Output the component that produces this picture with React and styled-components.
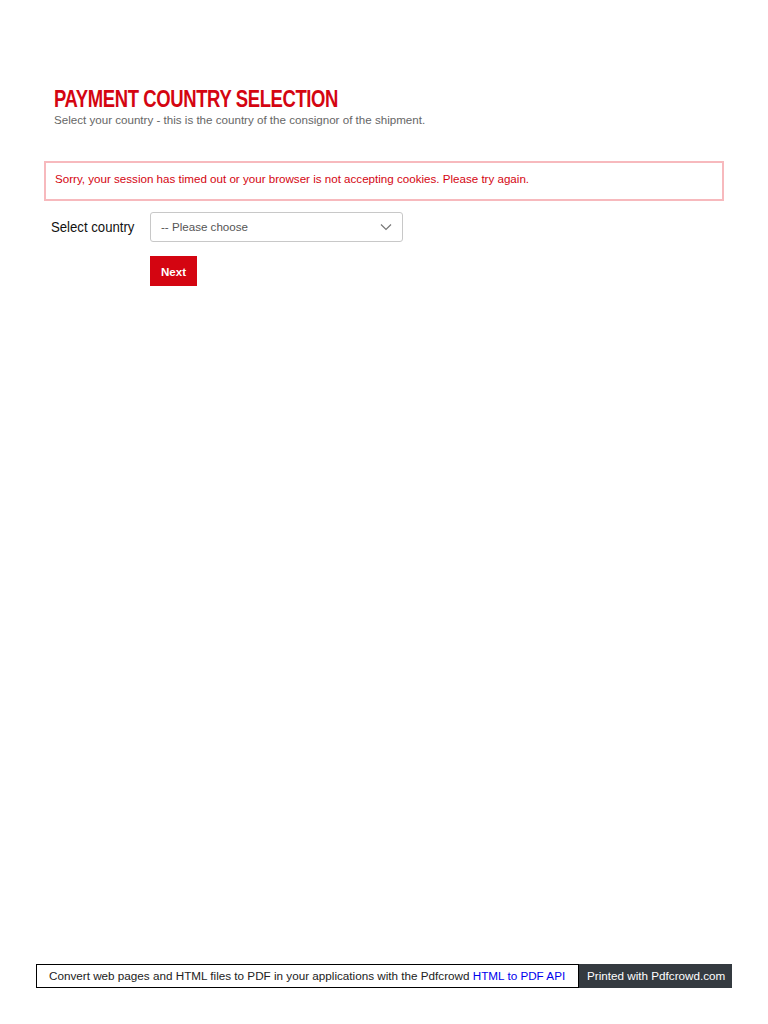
import styled, {createGlobalStyle} from 'styled-components';

const GlobalStyle = createGlobalStyle`
  html, body {
    margin: 0;
    padding: 0;
    background: #fff;
  }
  body {
    font-family: "Liberation Sans", Arial, sans-serif;
  }
`

const Page = styled.div`
  height: 1024px;
  display: flex;
  flex-direction: column;
  box-sizing: border-box;
  padding: 86px 0 36px;
`

const Main = styled.main`
  padding: 0 44px;
`

const Header = styled.header`
  padding-left: 10px;
  margin-bottom: 34px;
`

const Title = styled.h1`
  display: inline-block;
  margin: 0;
  font-family: "Liberation Sans", Arial, sans-serif;
  font-weight: bold;
  font-size: 24px;
  line-height: 26px;
  letter-spacing: -0.5px;
  color: #d40511;
  transform: scaleX(0.77);
  transform-origin: left center;
  white-space: nowrap;
`

const Subtitle = styled.p`
  margin: 0;
  font-size: 11.6px;
  line-height: 15px;
  color: #666;
`

const Alert = styled.div`
  border: 2px solid #f7b9bd;
  padding: 8px 9px 13px;
  font-size: 11.6px;
  line-height: 15px;
  color: #d40511;
  margin-bottom: 11px;
`

const Row = styled.div`
  display: flex;
  align-items: center;
  gap: 16px;
  padding-left: 7px;
`

const Label = styled.label`
  width: 83px;
  white-space: nowrap;
  font-size: 14px;
  color: #111;
  display: inline-block;
  transform: scaleX(0.94);
  transform-origin: left center;
`

const SelectBox = styled.div`
  box-sizing: border-box;
  width: 253px;
  height: 30px;
  border: 1px solid #c8c8c8;
  border-radius: 3px;
  display: flex;
  align-items: center;
  justify-content: space-between;
  padding: 0 10px;
  font-size: 11.6px;
  color: #555;

  span {
    margin-top: -1px;
  }
`

const Actions = styled.div`
  padding: 14px 0 0 106px;
`

const Button = styled.button`
  border: none;
  background: #d40511;
  color: #fff;
  font-family: "Liberation Sans", Arial, sans-serif;
  font-weight: bold;
  font-size: 11.6px;
  height: 30px;
  padding: 0 11px;
  cursor: pointer;
`

const Footer = styled.footer`
  margin-top: auto;
  display: flex;
  align-items: stretch;
  padding-left: 36px;
  font-size: 11.7px;
  line-height: 22px;
  white-space: nowrap;
`

const Promo = styled.div`
  width: 543px;
  box-sizing: border-box;
  border: 1px solid #000;
  padding: 0 0 0 12px;
  color: #222;

  a {
    color: #0000ee;
    text-decoration: none;
  }
`

const Printed = styled.div`
  width: 153px;
  box-sizing: border-box;
  background: #343a40;
  color: #fff;
  padding: 0 8px;
  line-height: 24px;
`

const Chevron = () => (
  <svg width="12" height="8" viewBox="0 0 12 8" fill="none">
    <path d="M1 1.5 6 6.5 11 1.5" stroke="#777" strokeWidth="1.2" />
  </svg>
)

const App = () => {
  return (
    <>
      <GlobalStyle />
      <Page>
        <Main>
          <Header>
            <Title>PAYMENT COUNTRY SELECTION</Title>
            <Subtitle>Select your country - this is the country of the consignor of the shipment.</Subtitle>
          </Header>
          <Alert>Sorry, your session has timed out or your browser is not accepting cookies. Please try again.</Alert>
          <Row>
            <Label>Select country</Label>
            <SelectBox>
              <span>-- Please choose</span>
              <Chevron />
            </SelectBox>
          </Row>
          <Actions>
            <Button type="button">Next</Button>
          </Actions>
        </Main>
        <Footer>
          <Promo>
            Convert web pages and HTML files to PDF in your applications with the Pdfcrowd <a href="#">HTML to PDF API</a>
          </Promo>
          <Printed>Printed with Pdfcrowd.com</Printed>
        </Footer>
      </Page>
    </>
  )
}

export default App;
